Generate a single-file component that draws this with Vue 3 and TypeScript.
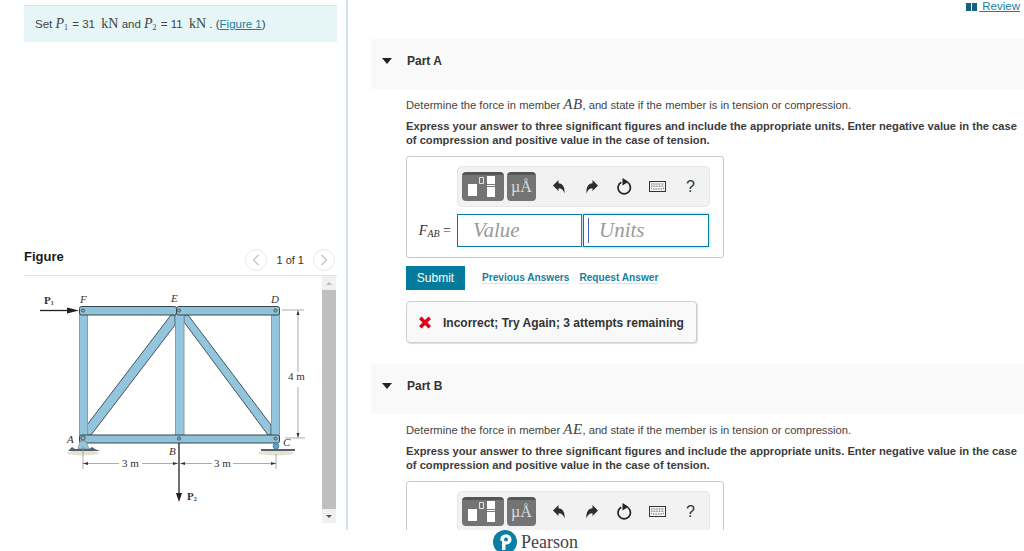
<script setup lang="ts">
const tools = ['undo', 'redo', 'reset', 'kbd', 'help']
const parts = [
  { name: 'Part A', a: 'AB', sub: 'AB' },
  { name: 'Part B', a: 'AE', sub: 'AE' },
]
</script>

<template>
  <div class="page">
    <div class="panes">
      <aside class="left">
        <div class="info">
          Set <i class="m p">P<sub>1</sub></i> = 31 &nbsp;<span class="m">kN</span> and <i class="m p">P<sub>2</sub></i> = 11 &nbsp;<span class="m">kN</span> . (<a>Figure 1</a>)
        </div>
        <div class="fig-head">
          <h2>Figure</h2>
          <div class="pager">
            <span class="circle"><svg width="8" height="12" viewBox="0 0 8 12"><path d="M6.500 1 1.500 6l5 5" fill="none" stroke="#c4c4c4" stroke-width="1.300"/></svg></span>
            <span class="count">1 of 1</span>
            <span class="circle"><svg width="8" height="12" viewBox="0 0 8 12"><path d="M1.500 1l5 5-5 5" fill="none" stroke="#c4c4c4" stroke-width="1.300"/></svg></span>
          </div>
        </div>
        <div class="fig-body">
          <svg class="truss" width="298" height="247" viewBox="24 277 298 247">
            <g stroke="#46555d" stroke-width="1">
              <path d="M87 426 171 316h4v10L91 436h-4Z" fill="#93c5dc"/>
              <path d="M184 316h4l83 110v10h-3L184 323Z" fill="#93c5dc"/>
            </g>
            <g fill="#93c5dc" stroke="#8f9a9f" stroke-width="1">
              <rect x="79.500" y="312" width="8" height="126"/>
              <rect x="175.500" y="312" width="8.500" height="126"/>
              <rect x="271.500" y="312" width="8" height="126"/>
            </g>
            <g fill="#8fc3da" stroke="#37454d" stroke-width="1">
              <rect x="79.500" y="307.500" width="97" height="8.500" rx="2"/>
              <rect x="176.500" y="307.500" width="103" height="8.500" rx="2"/>
              <rect x="79.500" y="436" width="200" height="8" rx="2"/>
            </g>
            <g fill="#9aa6aa" stroke="#444" stroke-width=".8">
              <circle cx="83" cy="311.500" r="1.600"/><circle cx="179" cy="311.500" r="1.600"/><circle cx="275.500" cy="311.500" r="1.600"/>
              <circle cx="83" cy="439" r="2.200"/><circle cx="179" cy="439.500" r="1.600"/><circle cx="275.500" cy="439.500" r="1.600"/>
            </g>
            <!-- supports -->
            <ellipse cx="83" cy="454" rx="16" ry="2.500" fill="#ddd9c6" opacity=".8"/>
            <ellipse cx="276" cy="454" rx="18" ry="2.500" fill="#ddd9c6" opacity=".8"/>
            <path d="M78 450 80 442h6l3 8Z" fill="#93c5dc" stroke="#6d7b82" stroke-width=".6"/>
            <path d="M68 452 72 448l3 2 3 0h11l3-2 3 2 5 2Z" fill="#55606a"/>
            <rect x="261" y="450" width="34" height="2" fill="#55606a"/>
            <circle cx="276" cy="447" r="3" fill="#4fa6c6" stroke="#3f6f85" stroke-width=".6"/>
            <!-- loads -->
            <path d="M40 311.500H72" stroke="#222" stroke-width="1.300"/>
            <path d="M67 308.500 79 311.500 67 314.500Z" fill="#222"/>
            <path d="M179 444V496" stroke="#222" stroke-width="1.300"/>
            <path d="M176 494 179 503 182 494Z" fill="#222"/>
            <!-- dimensions -->
            <g stroke="#888" stroke-width=".7" fill="none">
              <path d="M282 311h22M298 313V373M298 388V438M285 439h20M83 447V470M276 455V470"/>
              <path d="M83 464.500H119M142 464.500H178M181 464.500H212M233 464.500H276"/>
            </g>
            <g fill="#333">
              <path d="M298 311 296.500 316h3ZM298 439 296.500 434h3ZM83 464.500l5-1.500v3ZM178 464.500l-5-1.500v3ZM180 464.500l5-1.500v3ZM276 464.500l-5-1.500v3Z"/>
            </g>
            <g class="lbl">
              <text x="80" y="304" font-style="italic">F</text>
              <text x="171" y="303" font-style="italic">E</text>
              <text x="271" y="304" font-style="italic">D</text>
              <text x="67" y="444" font-style="italic">A</text>
              <text x="169" y="456" font-style="italic">B</text>
              <text x="283" y="447" font-style="italic">C</text>
              <text x="288" y="381">4 m</text>
              <text x="122" y="468">3 m</text>
              <text x="214" y="468">3 m</text>
              <text x="44" y="305" font-weight="700">P<tspan font-size="6" dy="1">1</tspan></text>
              <text x="187" y="501" font-weight="700">P<tspan font-size="6" dy="1">2</tspan></text>
            </g>
          </svg>
          <div class="scrollbar">
            <span class="arr up"></span>
            <span class="thumb"></span>
            <span class="arr down"></span>
          </div>
        </div>
      </aside>
      <main class="right">
        <div class="review"><svg width="11" height="8" viewBox="0 0 11 8"><path d="M0 0h5v8H0ZM6 0h5v8H6Z" fill="#14607f"/></svg><a>&nbsp;Review</a></div>
        <section v-for="(p, idx) in parts" :key="p.name" class="part">
          <header class="part-head"><span class="tri"></span><b>{{ p.name }}</b></header>
          <div class="part-body">
            <p class="q">Determine the force in member <i class="m big">{{ p.a }}</i>, and state if the member is in tension or compression.</p>
            <p class="ins">Express your answer to three significant figures and include the appropriate units. Enter negative value in the case of compression and positive value in the case of tension.</p>
            <div class="answer">
              <div class="toolbar">
                <span class="tb tmpl">
                  <svg width="42" height="29" viewBox="0 0 42 29"><path fill="#fff" d="M6 12h9v12H6ZM25 4h8v8h-8ZM25 15h8v10h-8ZM25 13h8v1h-8Z"/><path fill="none" stroke="#fff" stroke-width=".8" d="M17.500 5.500h4v6h-4Z"/></svg>
                </span>
                <span class="tb unit">µÅ</span>
                <span v-for="t in tools" :key="t" class="tool">
                  <svg v-if="t === 'undo'" width="12" height="14" viewBox="0 0 12 14"><path d="M0 5.500 5.500 0v3.200C9.500 3.500 12 6.500 11.500 13.500 10.500 10 8.500 8.200 5.500 8.200V11Z" fill="#2e2e2e"/></svg>
                  <svg v-else-if="t === 'redo'" width="12" height="14" viewBox="0 0 12 14"><path d="M12 5.500 6.500 0v3.200C2.500 3.500 0 6.500.5 13.500 1.500 10 3.500 8.200 6.500 8.200V11Z" fill="#2e2e2e"/></svg>
                  <svg v-else-if="t === 'reset'" width="15" height="17" viewBox="0 0 15 17"><path d="M10.500 4.400A6.200 6.200 0 1 1 4.300 4.200" fill="none" stroke="#222" stroke-width="1.700"/><path d="M5.500 0 11.500 3.800 5.500 7.500Z" fill="#222"/></svg>
                  <svg v-else-if="t === 'kbd'" width="17" height="11" viewBox="0 0 17 11"><rect x=".5" y=".5" width="16" height="10" fill="#f6f6f6" stroke="#333"/><path d="M2 3h13M2 5.200h13M2 7.400h1M14 7.400h1M4 8h9" stroke="#666" stroke-dasharray="1 .6" fill="none"/></svg>
                  <span v-else class="help">?</span>
                </span>
              </div>
              <div v-if="idx === 0" class="entry">
                <span class="var"><i>F<sub>{{ p.sub }}</sub></i> =</span>
                <span class="field">Value</span>
                <span class="field units"><span class="caret"></span>Units</span>
              </div>
            </div>
            <template v-if="idx === 0">
              <div class="actions">
                <button class="submit" type="button">Submit</button>
                <a>Previous Answers</a>
                <a>Request Answer</a>
              </div>
              <div class="feedback">
                <svg width="14" height="13" viewBox="0 0 14 13"><path d="M1 3 3.500.5 7 4 10.500.5 13 3 9.500 6.500 13 10 10.500 12.500 7 9 3.500 12.500 1 10 4.500 6.500Z" fill="#e0001b"/></svg>
                <span>Incorrect; Try Again; 3 attempts remaining</span>
              </div>
            </template>
          </div>
        </section>
      </main>
    </div>
    <footer class="foot">
      <svg width="24" height="21" viewBox="0 0 24 21"><circle cx="12" cy="12" r="12" fill="#0a7ea4"/><path d="M9 20V11H7.500C6.800 6.500 9.500 4.500 13 4.500c3.500 0 5.500 2.200 5.500 5s-2.300 5-5.500 5h-.5V20Z" fill="#fff"/><circle cx="13" cy="9.500" r="2" fill="#0a7ea4"/></svg>
      <span>Pearson</span>
    </footer>
  </div>
</template>

<style>
html, body { margin: 0; background: #fff; }
</style>

<style scoped>
.page { width: 1024px; height: 551px; overflow: hidden; font-family: "Liberation Sans", Arial, sans-serif; color: #333; background: #fff; }
.panes { display: flex; height: 530px; }
.left { width: 348px; flex: none; box-sizing: border-box; padding: 5px 9px 0 24px; border-right: 2px solid #d5e3ee; height: 530px; }
.m { font-family: "Liberation Serif", serif; font-size: 14px; }
.p { margin-right: 1px; }
.info { height: 36px; border-top: 1px solid #d7e4e8; background: #e6f5f6; font-size: 11.500px; padding-left: 11px; line-height: 36px; color: #444; white-space: nowrap; }
.info sub { font-size: 8px; line-height: 0; font-style: normal; vertical-align: -2px; }
.info a { color: #1a7fa0; text-decoration: underline; }
.fig-head { display: flex; justify-content: space-between; align-items: center; height: 36px; margin-top: 198px; border-bottom: 1px solid #dfe2e4; box-sizing: border-box; padding: 0 2px 3px 0; }
.fig-head h2 { margin: 0; font-size: 13px; color: #1a1a1a; }
.pager { display: flex; align-items: center; gap: 9px; font-size: 11px; margin-top: 7px; }
.circle { width: 22px; height: 22px; box-sizing: border-box; border: 1px solid #e8e8e8; border-radius: 50%; display: flex; align-items: center; justify-content: center; }
.fig-body { display: flex; align-items: flex-start; }
.truss { flex: none; display: block; }
.lbl text { font-family: "Liberation Serif", serif; font-size: 11px; fill: #333; }
.scrollbar { width: 14px; height: 247px; display: flex; flex-direction: column; background: #f0f0f0; }
.arr { height: 14px; display: flex; justify-content: center; align-items: center; flex: none; }
.arr::after { content: ""; border-left: 3.500px solid transparent; border-right: 3.500px solid transparent; }
.up::after { border-bottom: 3.500px solid #b8b8b8; }
.down::after { border-top: 3.500px solid #555; }
.thumb { flex: 1; background: #bfbfbf; }
.right { margin-left: 23px; flex: 1; min-width: 0; overflow: hidden; }
.review { height: 39px; display: flex; justify-content: flex-end; padding-right: 4px; font-size: 11.500px; line-height: 13px; box-sizing: border-box; }
.review svg { margin: 3px 2px 0 0; }
.review a { color: #1a7fa0; text-decoration: underline; }
.part-head { height: 50px; background: #f9f9f9; display: flex; align-items: center; font-size: 12px; color: #333; padding-bottom: 7px; box-sizing: border-box; }
.part-head b { margin-left: 15px; font-weight: 700; }
.tri { margin-left: 11px; border-left: 5px solid transparent; border-right: 5px solid transparent; border-top: 6px solid #222; }
.part-body { padding-left: 35px; }
.q { margin: 0; padding-top: 8px; font-size: 11.200px; line-height: 15px; height: 22px; color: #444; white-space: nowrap; }
.m.big { font-size: 15px; letter-spacing: .4px; }
.ins { margin: 0; font-size: 11.180px; font-weight: 700; line-height: 14px; color: #3c3c3c; height: 37px; }
.answer { width: 316px; height: 100px; border: 1px solid #c9c9c9; border-radius: 3px; }
.toolbar { margin: 9px 0 0 50px; width: 253px; height: 41px; background: #f2f2f2; border: 1px solid #e6e6e6; border-radius: 5px; display: flex; align-items: center; padding-left: 4px; box-sizing: border-box; }
.tb { height: 29px; background: linear-gradient(#555 0 3px, #747474 3px); border-radius: 4px; display: flex; align-items: center; justify-content: center; color: #ddd; font-family: "Liberation Serif", serif; font-size: 16px; }
.tmpl { width: 42px; }
.unit { width: 29px; margin-left: 3px; margin-right: 6px; }
.tool { width: 33px; display: flex; align-items: center; justify-content: center; }
.help { font-size: 16px; color: #333; }
.entry { display: flex; align-items: center; margin-top: 7px; }
.var { width: 50px; text-align: right; padding-right: 6px; box-sizing: border-box; font-family: "Liberation Serif", serif; font-size: 14px; white-space: nowrap; }
.var sub { font-size: 10px; line-height: 0; vertical-align: -2px; }
.field { width: 125px; height: 33px; border: 1px solid #07799b; box-sizing: border-box; font-family: "Liberation Serif", serif; font-style: italic; font-size: 21px; color: #999; line-height: 31px; padding-left: 15px; }
.units { width: 126px; margin-left: 1px; box-shadow: 0 0 3px #6fc5dc; position: relative; }
.caret { position: absolute; left: 4px; top: 3px; width: 1px; height: 25px; background: #4060c8; }
.actions { display: flex; align-items: center; margin-top: 8px; font-size: 10.150px; font-weight: 700; color: #1a7fa0; }
.actions a { border-bottom: 1px solid #d0e6ee; margin-left: 10px; }
.actions .submit + a { margin-left: 17px; }
.submit { width: 59px; height: 24px; background: #047a9c; color: #fff; border: 0; padding: 0; font: 12px "Liberation Sans", Arial, sans-serif; }
.feedback { display: flex; align-items: center; gap: 11px; margin-top: 11px; width: 291px; height: 42px; box-sizing: border-box; padding: 1px 0 0 11px; border: 1px solid #d0d0d0; border-radius: 4px; background: #f9f9f9; box-shadow: 1px 1px 1px #ddd; font-size: 12px; font-weight: 700; color: #333; white-space: nowrap; margin-bottom: 21px; }
.foot { height: 21px; display: flex; padding-left: 493px; gap: 4px; overflow: hidden; font-family: "Liberation Serif", serif; font-size: 18px; color: #444; }
.foot span { padding-top: 4px; line-height: 17px; }
</style>
